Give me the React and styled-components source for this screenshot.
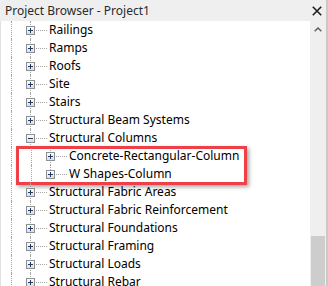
import styled, { createGlobalStyle } from "styled-components";

const GlobalStyle = createGlobalStyle`
    html, body {
        margin: 0;
        padding: 0;
        background: #ffffff;
    }
`

const tree = [
    { label: 'Railings' },
    { label: 'Ramps' },
    { label: 'Roofs' },
    { label: 'Site' },
    { label: 'Stairs' },
    { label: 'Structural Beam Systems' },
    {
        label: 'Structural Columns',
        open: true,
        children: ['Concrete-Rectangular-Column', 'W Shapes-Column'],
    },
    { label: 'Structural Fabric Areas' },
    { label: 'Structural Fabric Reinforcement' },
    { label: 'Structural Foundations' },
    { label: 'Structural Framing' },
    { label: 'Structural Loads' },
    { label: 'Structural Rebar' },
]

const ExpandBox = ({ open }) => (
    <svg width="9" height="9" viewBox="0 0 9 9">
        <defs>
            <linearGradient id="boxfill" x1="0" y1="0" x2="0" y2="1">
                <stop offset="0" stopColor="#ffffff" />
                <stop offset="1" stopColor="#dcdcdc" />
            </linearGradient>
        </defs>
        <rect x="0.5" y="0.5" width="8" height="8" fill="url(#boxfill)" stroke="#8e8f8f" />
        <rect x="2" y="4" width="5" height="1" fill="#1f3b66" />
        {!open && <rect x="4" y="2" width="1" height="5" fill="#1f3b66" />}
    </svg>
)

const TreeRow = ({ label, level, open, last }) => (
    <Row>
        <Guide />
        {level > 0 && <Guide />}
        <Connector $last={last}>
            <BoxSlot>
                <ExpandBox open={open} />
            </BoxSlot>
        </Connector>
        <Label>{label}</Label>
    </Row>
)

const App = () => {
    return (
        <>
            <GlobalStyle />
            <Panel>
                <TitleBar>
                    <Title>Project Browser - Project1</Title>
                    <CloseButton>
                        <svg width="10" height="10" viewBox="0 0 10 10">
                            <path d="M0.8 0.8 L9.2 9.2 M9.2 0.8 L0.8 9.2" stroke="#1e1e1e" strokeWidth="1.6" />
                        </svg>
                    </CloseButton>
                </TitleBar>
                <Body>
                    <Tree>
                        {tree.map(item => (
                            <div key={item.label}>
                                <TreeRow label={item.label} level={0} open={item.open} />
                                {item.children && (
                                    <Highlight>
                                        {item.children.map((child, i) => (
                                            <TreeRow
                                                key={child}
                                                label={child}
                                                level={1}
                                                last={i === item.children.length - 1}
                                            />
                                        ))}
                                    </Highlight>
                                )}
                            </div>
                        ))}
                    </Tree>
                    <Scrollbar>
                        <ArrowButton>
                            <svg width="8" height="5" viewBox="0 0 8 5">
                                <path d="M0.7 4.3 L4 1 L7.3 4.3" fill="none" stroke="#606060" strokeWidth="1.5" />
                            </svg>
                        </ArrowButton>
                        <Track>
                            <Thumb />
                        </Track>
                    </Scrollbar>
                </Body>
            </Panel>
        </>
    );
}

const Panel = styled.div`
    width: 328px;
    height: 286px;
    display: flex;
    flex-direction: column;
    background: #efefef;
    border-right: 2px solid #c9c9c9;
    box-sizing: border-box;
    overflow: hidden;
    font-family: "Noto Sans", "Open Sans", sans-serif;
`

const TitleBar = styled.div`
    height: 21px;
    flex: none;
    display: flex;
    align-items: center;
    justify-content: space-between;
    padding: 0 4px 0 5px;
`

const Title = styled.span`
    font-size: 12px;
    color: #2b2b2b;
    white-space: nowrap;
`

const CloseButton = styled.span`
    display: flex;
    align-items: center;
    margin-top: 1px;
`

const Body = styled.div`
    flex: 1;
    display: flex;
    min-height: 0;
`

const Tree = styled.div`
    flex: 1;
    background: #ffffff;
    border-left: 1px solid #e2e2e2;
    overflow: hidden;
`

const Row = styled.div`
    display: flex;
    height: 18px;
    align-items: stretch;
`

const Guide = styled.span`
    width: 20px;
    flex: none;
    position: relative;

    &::before {
        content: '';
        position: absolute;
        left: 10px;
        top: 0;
        bottom: 0;
        border-left: 1px dotted #a5a5a5;
    }
`

const Connector = styled.span`
    width: 27px;
    flex: none;
    position: relative;

    &::before {
        content: '';
        position: absolute;
        left: 9px;
        top: 0;
        bottom: ${props => props.$last ? '9px' : '0'};
        border-left: 1px dotted #a5a5a5;
    }

    &::after {
        content: '';
        position: absolute;
        left: 15px;
        width: 11px;
        top: 9px;
        border-top: 1px dotted #a5a5a5;
    }
`

const BoxSlot = styled.span`
    position: absolute;
    left: 5px;
    top: 5px;
    z-index: 1;
    display: flex;
`

const Label = styled.span`
    font-size: 12px;
    line-height: 18px;
    color: #000000;
    white-space: nowrap;
    padding-left: 1px;
`

const Highlight = styled.div`
    position: relative;

    &::after {
        content: '';
        position: absolute;
        left: 15px;
        width: 231px;
        top: -1px;
        bottom: -2px;
        border: 3px solid #ef3f47;
        box-sizing: border-box;
        box-shadow: 2px 2px 4px rgba(0, 0, 0, 0.35);
        pointer-events: none;
    }
`

const Scrollbar = styled.div`
    width: 16px;
    flex: none;
    display: flex;
    flex-direction: column;
    background: #efefef;
`

const ArrowButton = styled.div`
    height: 17px;
    display: flex;
    align-items: center;
    justify-content: center;
`

const Track = styled.div`
    flex: 1;
    display: flex;
    flex-direction: column;
    justify-content: flex-end;
`

const Thumb = styled.div`
    height: 50px;
    margin: 0 1px;
    background: #cdcdcd;
`

export default App
